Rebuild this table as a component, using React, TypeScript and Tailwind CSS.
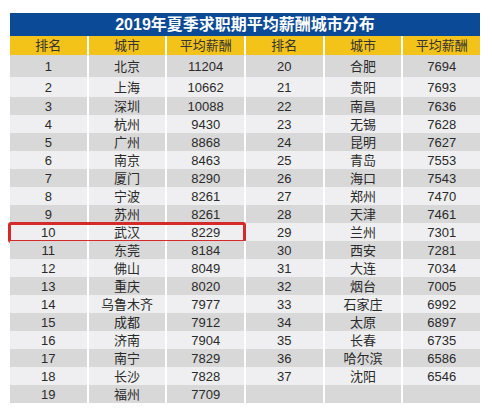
const rows: Array<[string, string, string, string, string, string]> = [
  ["1", "北京", "11204", "20", "合肥", "7694"],
  ["2", "上海", "10662", "21", "贵阳", "7693"],
  ["3", "深圳", "10088", "22", "南昌", "7636"],
  ["4", "杭州", "9430", "23", "无锡", "7628"],
  ["5", "广州", "8868", "24", "昆明", "7627"],
  ["6", "南京", "8463", "25", "青岛", "7553"],
  ["7", "厦门", "8290", "26", "海口", "7543"],
  ["8", "宁波", "8261", "27", "郑州", "7470"],
  ["9", "苏州", "8261", "28", "天津", "7461"],
  ["10", "武汉", "8229", "29", "兰州", "7301"],
  ["11", "东莞", "8184", "30", "西安", "7281"],
  ["12", "佛山", "8049", "31", "大连", "7034"],
  ["13", "重庆", "8020", "32", "烟台", "7005"],
  ["14", "乌鲁木齐", "7977", "33", "石家庄", "6992"],
  ["15", "成都", "7912", "34", "太原", "6897"],
  ["16", "济南", "7904", "35", "长春", "6735"],
  ["17", "南宁", "7829", "36", "哈尔滨", "6586"],
  ["18", "长沙", "7828", "37", "沈阳", "6546"],
  ["19", "福州", "7709", "", "", ""],
];

const heads = ["排名", "城市", "平均薪酬", "排名", "城市", "平均薪酬"];

const heightFor = (i: number) =>
  i === 0 ? "h-[22px]" : i === 1 ? "h-[20px]" : "h-[18px]";

export default function App() {
  return (
    <div
      className="w-[492px] h-[419px] bg-white pt-[13px] pl-[10px] text-[#2a2a2a]"
      style={{ fontFamily: '"Liberation Sans", "Noto Sans CJK SC", sans-serif' }}
    >
      <div className="w-[470px] flex flex-col">
        <div className="h-[23px] bg-[#0b4a97] text-white font-bold text-[16px] flex items-center justify-center">
          2019年夏季求职期平均薪酬城市分布
        </div>

        <div className="h-[19px] flex gap-[2px] bg-white">
          {heads.map((h, i) => (
            <div
              key={i}
              className="flex-1 bg-[#f4c31a] flex items-center justify-center text-[13px] text-[#333]"
            >
              {h}
            </div>
          ))}
        </div>

        {rows.map((r, i) => (
          <div key={i} className={`relative flex gap-[2px] bg-white ${heightFor(i)}`}>
            {r.map((c, j) => (
              <div
                key={j}
                className={
                  i % 2 === 0
                    ? "flex-1 bg-[#d8d8d9] flex items-center justify-center text-[13px] leading-none"
                    : "flex-1 bg-[#efeff1] flex items-center justify-center text-[13px] leading-none"
                }
              >
                {c}
              </div>
            ))}
            {i === 9 && (
              <div className="absolute left-[-2px] top-[-1px] w-[238px] h-[21px] border-[3px] border-[#d42a2a] rounded-[3px]" />
            )}
          </div>
        ))}
      </div>
    </div>
  );
}
